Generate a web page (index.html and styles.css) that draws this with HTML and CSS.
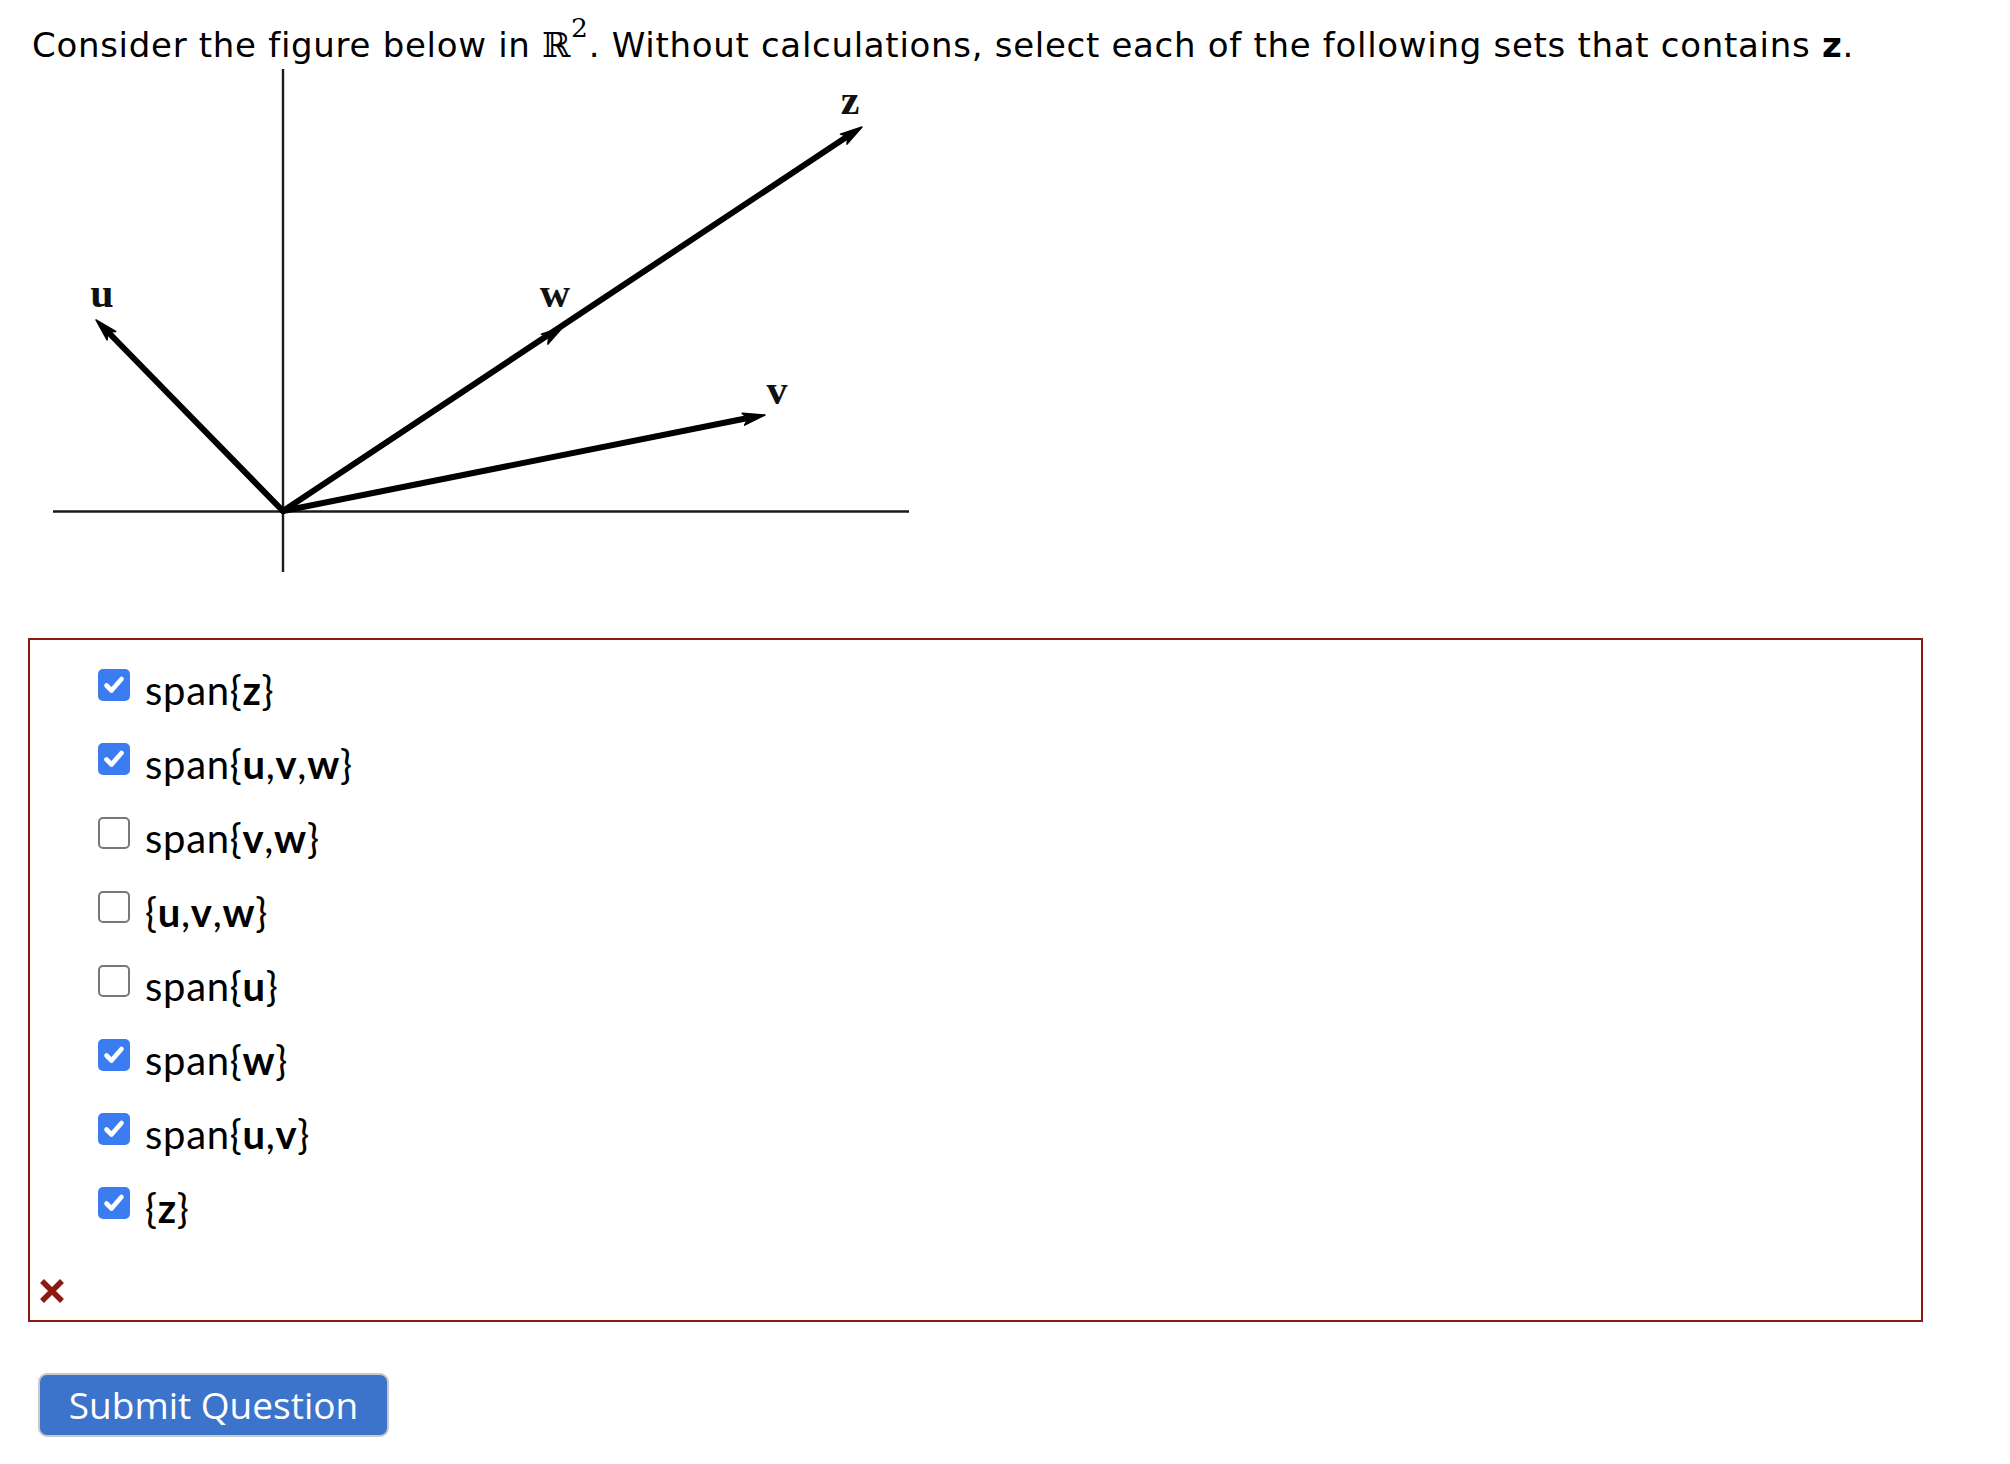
FILE: index.html
```html
<!DOCTYPE html>
<html lang="en">
<head>
<meta charset="utf-8">
<title>Question</title>
<link rel="stylesheet" href="styles.css">
</head>
<body>
<main class="page">
  <p class="prompt">Consider the figure below in <span class="bb">ℝ</span><sup class="sup">2</sup>. Without calculations, select each of the following sets that contains <b>z</b>.</p>

  <svg class="figure" width="880" height="520" viewBox="40 65 880 520" xmlns="http://www.w3.org/2000/svg">
    <g class="axes">
      <line x1="283" y1="69" x2="283" y2="572"/>
      <line x1="53" y1="511.5" x2="909" y2="511.5"/>
    </g>
    <g class="vectors">
      <line x1="283" y1="511" x2="108" y2="332"/>
      <line x1="283" y1="511" x2="848" y2="136"/>
      <line x1="283" y1="511" x2="748" y2="418"/>
    </g>
    <g class="heads">
      <polygon points="96,320 115.7,331.5 107.9,332.2 107.1,339.9"/>
      <polygon points="563,327 547.9,344.1 548.8,336.3 541.3,334.1"/>
      <polygon points="862,127 847,144.1 847.8,136.4 840.4,134.1"/>
      <polygon points="765,415 744.6,425.1 748.3,418.3 742.2,413.3"/>
    </g>
    <g class="labels">
      <text x="102" y="307">u</text>
      <text x="555" y="307">w</text>
      <text x="777" y="404">v</text>
      <text x="850" y="114">z</text>
    </g>
  </svg>

  <div class="answer-box">
    <ul class="choices">
      <li class="choice"><span class="box checked"><svg viewBox="0 0 32 32" width="32" height="32"><path d="M8.5 16.5 L13.5 21.5 L23.5 10"/></svg></span><span class="label">span{<b>z</b>}</span></li>
      <li class="choice"><span class="box checked"><svg viewBox="0 0 32 32" width="32" height="32"><path d="M8.5 16.5 L13.5 21.5 L23.5 10"/></svg></span><span class="label">span{<b>u</b>,<b>v</b>,<b>w</b>}</span></li>
      <li class="choice"><span class="box"></span><span class="label">span{<b>v</b>,<b>w</b>}</span></li>
      <li class="choice"><span class="box"></span><span class="label">{<b>u</b>,<b>v</b>,<b>w</b>}</span></li>
      <li class="choice"><span class="box"></span><span class="label">span{<b>u</b>}</span></li>
      <li class="choice"><span class="box checked"><svg viewBox="0 0 32 32" width="32" height="32"><path d="M8.5 16.5 L13.5 21.5 L23.5 10"/></svg></span><span class="label">span{<b>w</b>}</span></li>
      <li class="choice"><span class="box checked"><svg viewBox="0 0 32 32" width="32" height="32"><path d="M8.5 16.5 L13.5 21.5 L23.5 10"/></svg></span><span class="label">span{<b>u</b>,<b>v</b>}</span></li>
      <li class="choice"><span class="box checked"><svg viewBox="0 0 32 32" width="32" height="32"><path d="M8.5 16.5 L13.5 21.5 L23.5 10"/></svg></span><span class="label">{<b>z</b>}</span></li>
    </ul>
    <svg class="wrong" width="26" height="24" viewBox="0 0 26 24" aria-label="incorrect">
      <path d="M3 2 L23 22 M23 2 L3 22"/>
    </svg>
  </div>

  <button class="submit" type="button">Submit Question</button>
</main>
</body>
</html>
```

FILE: styles.css
```css
html, body {
  margin: 0;
  padding: 0;
  background: #ffffff;
  color: #000000;
}

.page {
  padding: 0 0 40px 28px;
}

.prompt {
  margin: 0 0 0 4px;
  padding-top: 26px;
  font-family: "DejaVu Sans", Verdana, sans-serif;
  font-size: 34px;
  letter-spacing: 0.7px;
  line-height: 39px;
  white-space: nowrap;
}

.prompt b {
  font-weight: 700;
}

.bb {
  font-family: "DejaVu Serif", serif;
}

.sup {
  font-family: "DejaVu Serif", serif;
  font-size: 0.78em;
  line-height: 0;
  vertical-align: 0.75em;
}

.figure {
  display: block;
  margin-left: 12px;
}

.axes line {
  stroke: #1a1a1a;
  stroke-width: 2.4;
}

.vectors line {
  stroke: #000;
  stroke-width: 6;
  stroke-linecap: round;
}

.heads polygon {
  fill: #000;
  stroke: #000;
  stroke-width: 1.5;
  stroke-linejoin: round;
}

.labels text {
  font-family: "Liberation Serif", "Times New Roman", serif;
  font-weight: 700;
  font-size: 42px;
  text-anchor: middle;
  fill: #111;
}

.answer-box {
  box-sizing: border-box;
  width: 1895px;
  margin-top: 53px;
  border: 2px solid #8c1c13;
  padding: 0 0 17px 9px;
}

.choices {
  list-style: none;
  margin: 0;
  padding: 29px 0 0 59px;
}

.choice {
  display: flex;
  align-items: flex-start;
  height: 74px;
}

.box {
  box-sizing: border-box;
  flex: none;
  width: 32px;
  height: 32px;
  border: 2px solid #787878;
  border-radius: 5px;
  background: #fff;
}

.box.checked {
  border: none;
  background: #3b7cf1;
}

.box svg {
  display: block;
}

.box svg path {
  fill: none;
  stroke: #fff;
  stroke-width: 4.6;
  stroke-linecap: round;
  stroke-linejoin: round;
}

.label {
  margin-left: 15px;
  margin-top: -1px;
  font-family: "Lato", "Open Sans", sans-serif;
  font-size: 40px;
  letter-spacing: 0.7px;
  line-height: 44px;
}

.label b {
  font-weight: 700;
}

.wrong {
  display: block;
  margin-top: 18px;
}

.wrong path {
  fill: none;
  stroke: #8b1a10;
  stroke-width: 5.5;
}

.submit {
  display: block;
  box-sizing: border-box;
  width: 351px;
  height: 64px;
  margin: 51px 0 0 10px;
  padding: 0 0 2px;
  background: #3d74cb;
  border: 2px solid #c9c9c9;
  border-radius: 9px;
  color: #ffffff;
  font-family: "Open Sans", "Noto Sans", sans-serif;
  font-size: 37px;
  line-height: 1;
}
```
